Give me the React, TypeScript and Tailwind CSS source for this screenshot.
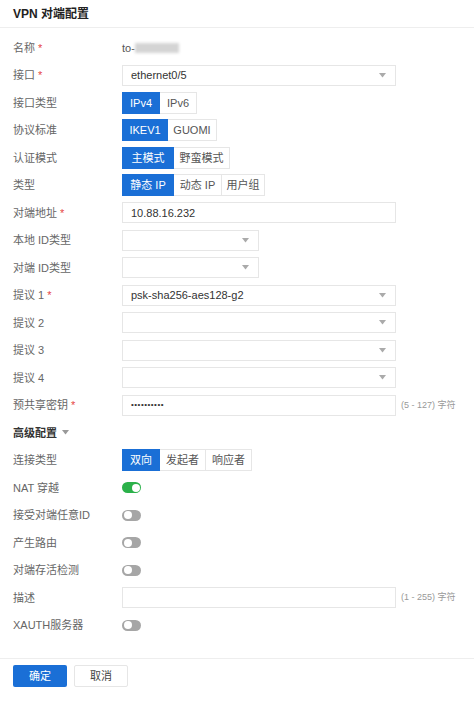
import type { ReactNode } from 'react';

const font = { fontFamily: '"Liberation Sans", "Noto Sans CJK SC", sans-serif' };

function Label({ text, required }: { text: string; required?: boolean }) {
  return (
    <div className="w-[109px] shrink-0 text-[11px] text-[#666]">
      {text}
      {required && <span className="ml-[3px] text-[#e64545]">*</span>}
    </div>
  );
}

function Row({ label, required, children }: { label: string; required?: boolean; children?: ReactNode }) {
  return (
    <div className="flex h-[27.5px] items-center">
      <Label text={label} required={required} />
      {children}
    </div>
  );
}

function Caret() {
  return (
    <svg width="7" height="5" viewBox="0 0 7 5" className="ml-auto">
      <path d="M0 0h7L3.5 4.5z" fill="#aaa" />
    </svg>
  );
}

function Select({ value, small }: { value?: string; small?: boolean }) {
  return (
    <div
      className={`flex h-[21px] items-center border border-[#e6e6e6] bg-white pl-[8px] pr-[9px] text-[11px] text-[#333] ${
        small ? 'w-[137px]' : 'w-[274px]'
      }`}
    >
      <span>{value}</span>
      <Caret />
    </div>
  );
}

function Input({ children, hint }: { children?: ReactNode; hint?: string }) {
  return (
    <>
      <div className="flex h-[21px] w-[274px] shrink-0 items-center border border-[#e6e6e6] bg-white pl-[8px] text-[11px] text-[#333]">
        {children}
      </div>
      {hint && <span className="ml-[5px] whitespace-nowrap text-[9px] text-[#999]">{hint}</span>}
    </>
  );
}

function Segmented({ items, widths }: { items: string[]; widths: string[] }) {
  return (
    <div className="flex h-[22px]">
      {items.map((it, i) => (
        <div
          key={it}
          className={`flex items-center justify-center text-[11px] ${widths[i]} ${
            i === 0 ? 'bg-[#1a6fd6] text-white' : 'border border-l-0 border-[#e6e6e6] bg-white text-[#555]'
          }`}
        >
          {it}
        </div>
      ))}
    </div>
  );
}

function Toggle({ on }: { on?: boolean }) {
  return (
    <div
      className={`flex h-[11px] w-[19px] items-center rounded-full px-[1.5px] ${
        on ? 'justify-end bg-[#2bb14a]' : 'justify-start bg-[#a6a6a6]'
      }`}
    >
      <div className="h-[8px] w-[8px] rounded-full bg-white" />
    </div>
  );
}

export default function App() {
  return (
    <div className="h-[703px] w-[474px] bg-white" style={font}>
      {/* Header */}
      <div className="flex h-[28px] items-center border-b border-[#eeeeee] px-[13px] text-[12px] font-bold text-[#222]">
        VPN 对端配置
      </div>

      {/* Form */}
      <div className="px-[13px] pt-[6px]">
        <Row label="名称" required>
          <span className="text-[11px] text-[#555]">to-</span>
          <span className="h-[10px] w-[44px] bg-[#d4d4d4] blur-[1.5px]" />
        </Row>
        <Row label="接口" required>
          <Select value="ethernet0/5" />
        </Row>
        <Row label="接口类型">
          <Segmented items={['IPv4', 'IPv6']} widths={['w-[38px]', 'w-[37px]']} />
        </Row>
        <Row label="协议标准">
          <Segmented items={['IKEV1', 'GUOMI']} widths={['w-[46px]', 'w-[49px]']} />
        </Row>
        <Row label="认证模式">
          <Segmented items={['主模式', '野蛮模式']} widths={['w-[52px]', 'w-[56px]']} />
        </Row>
        <Row label="类型">
          <Segmented items={['静态 IP', '动态 IP', '用户组']} widths={['w-[52px]', 'w-[48px]', 'w-[43px]']} />
        </Row>
        <Row label="对端地址" required>
          <Input>10.88.16.232</Input>
        </Row>
        <Row label="本地 ID类型">
          <Select small />
        </Row>
        <Row label="对端 ID类型">
          <Select small />
        </Row>
        <Row label="提议 1" required>
          <Select value="psk-sha256-aes128-g2" />
        </Row>
        <Row label="提议 2">
          <Select />
        </Row>
        <Row label="提议 3">
          <Select />
        </Row>
        <Row label="提议 4">
          <Select />
        </Row>
        <Row label="预共享密钥" required>
          <Input hint="(5 - 127) 字符">
            <span className="text-[8px] tracking-[0.5px]">••••••••••</span>
          </Input>
        </Row>

        <div className="flex h-[27.5px] items-center gap-[5px] text-[11px] font-bold text-[#333]">
          高级配置
          <svg width="7" height="5" viewBox="0 0 7 5">
            <path d="M0 0h7L3.5 4.5z" fill="#999" />
          </svg>
        </div>

        <Row label="连接类型">
          <Segmented items={['双向', '发起者', '响应者']} widths={['w-[38px]', 'w-[46px]', 'w-[46px]']} />
        </Row>
        <Row label="NAT 穿越">
          <Toggle on />
        </Row>
        <Row label="接受对端任意ID">
          <Toggle />
        </Row>
        <Row label="产生路由">
          <Toggle />
        </Row>
        <Row label="对端存活检测">
          <Toggle />
        </Row>
        <Row label="描述">
          <Input hint="(1 - 255) 字符" />
        </Row>
        <Row label="XAUTH服务器">
          <Toggle />
        </Row>
      </div>

      {/* Footer */}
      <div className="mt-[19px] flex gap-[7px] border-t border-[#eeeeee] px-[13px] pt-[6px]">
        <button className="h-[22px] w-[54px] rounded-[2px] bg-[#1a6fd6] text-[11px] text-white">确定</button>
        <button className="h-[22px] w-[54px] rounded-[2px] border border-[#e6e6e6] bg-white text-[11px] text-[#444]">
          取消
        </button>
      </div>
    </div>
  );
}
